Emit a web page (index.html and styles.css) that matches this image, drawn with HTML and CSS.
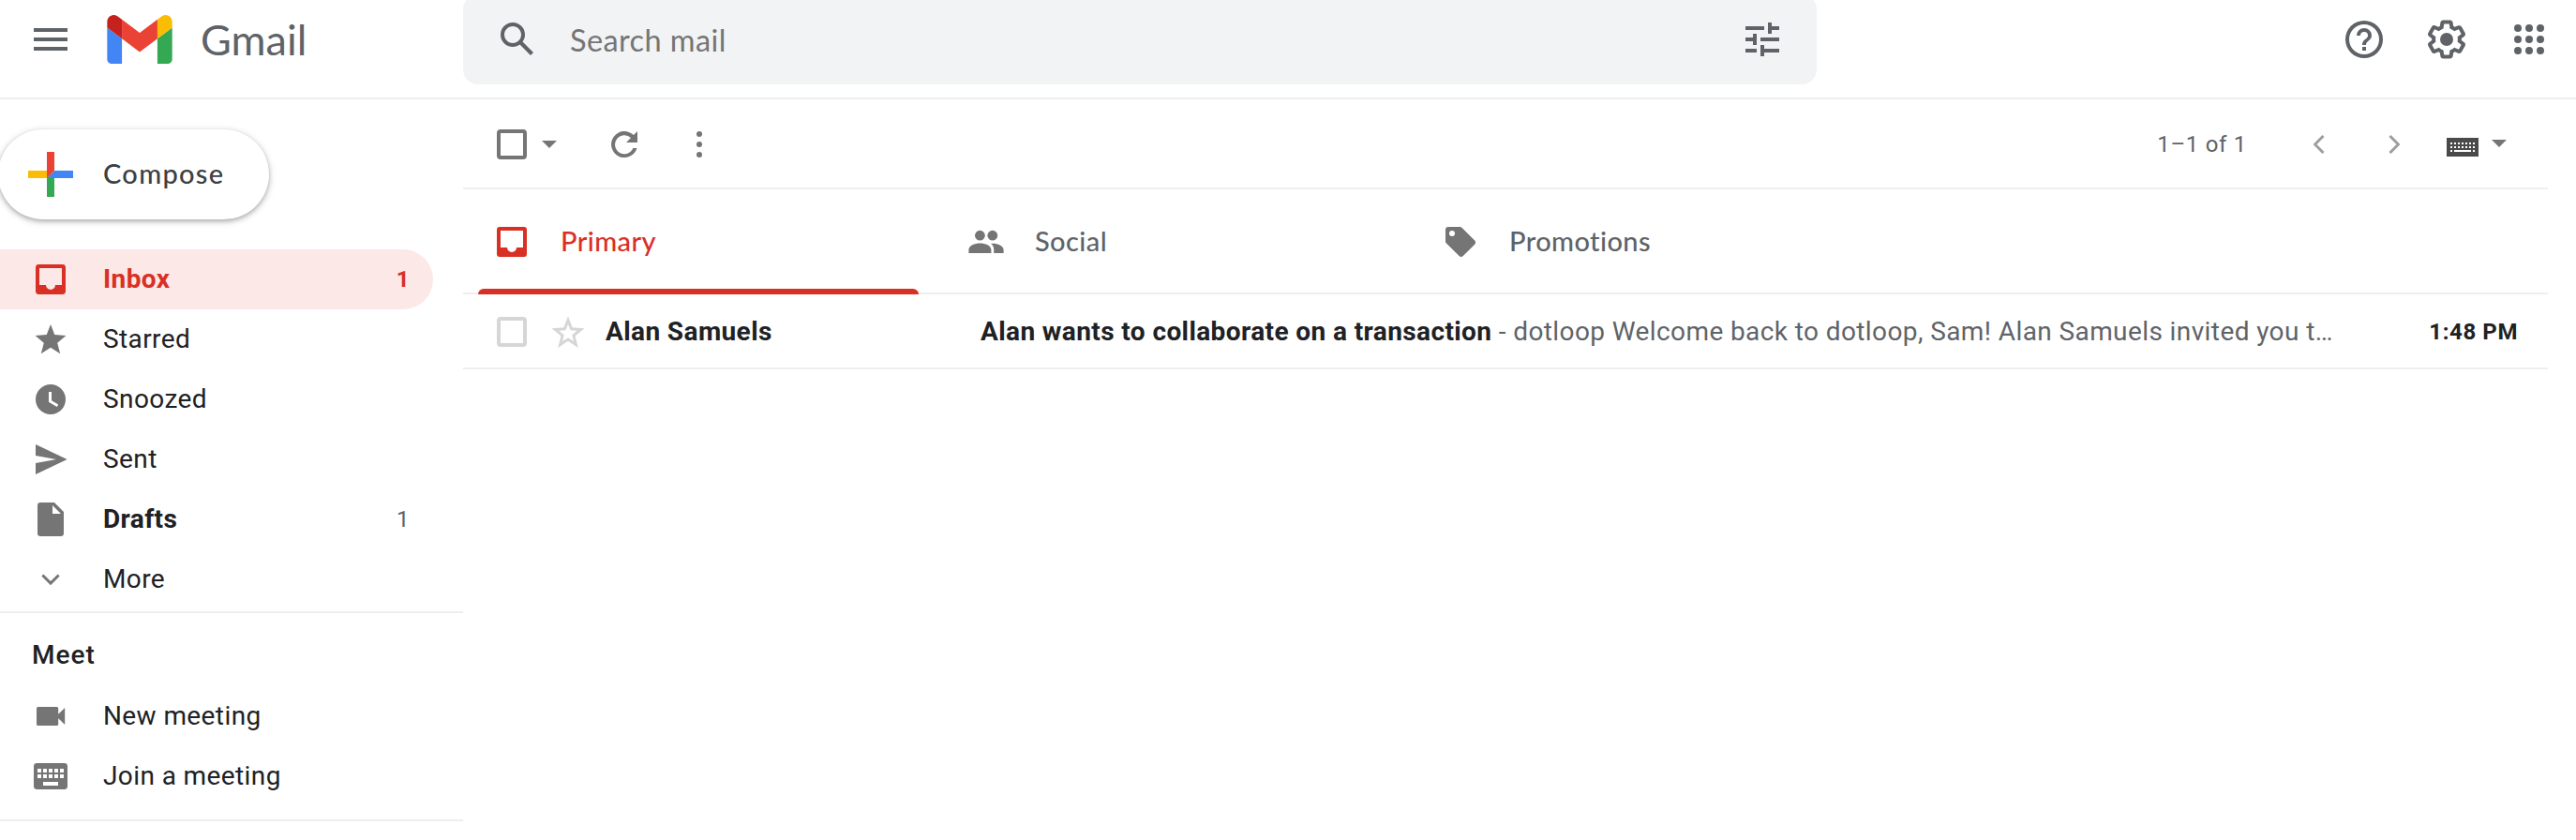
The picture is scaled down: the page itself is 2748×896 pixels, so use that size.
FILE: index.html
```
<!DOCTYPE html>
<html lang="en">
<head>
<meta charset="utf-8">
<title>Gmail</title>
<link rel="stylesheet" href="styles.css">
</head>
<body>
<header class="header">
  <div class="brand">
    <svg class="icon48" viewBox="0 0 24 24"><path d="M3 6h18v2H3zm0 5h18v2H3zm0 5h18v2H3z"/></svg>
    <svg class="logo" viewBox="52 42 88 66"><path fill="#4285f4" d="M58 108h14V74L52 59v43c0 3.320 2.690 6 6 6"/><path fill="#34a853" d="M120 108h14c3.320 0 6-2.690 6-6V59l-20 15"/><path fill="#fbbc04" d="M120 48v26l20-15v-8c0-7.420-8.470-11.650-14.400-7.200"/><path fill="#ea4335" d="M72 74V48l24 18 24-18v26L96 92"/><path fill="#c5221f" d="M52 51v8l20 15V48l-5.600-4.200c-5.940-4.450-14.400-.22-14.400 7.200"/></svg>
    <span class="brand-name">Gmail</span>
  </div>
  <div class="search">
    <svg class="icon48" viewBox="0 0 24 24"><path d="M20.490 19l-5.730-5.730C15.530 12.200 16 10.910 16 9.500A6.500 6.500 0 1 0 9.500 16c1.410 0 2.700-.47 3.770-1.240L19 20.490 20.490 19zM5 9.500C5 7.010 7.010 5 9.500 5S14 7.010 14 9.500 11.990 14 9.500 14 5 11.990 5 9.500z"/></svg>
    <span class="search-text">Search mail</span>
    <svg class="icon48" viewBox="0 0 24 24"><path d="M3 17v2h6v-2H3zM3 5v2h10V5H3zm10 16v-2h8v-2h-8v-2h-2v6h2zM7 9v2H3v2h4v2h2V9H7zm14 4v-2H11v2h10zm-6-4h2V7h4V5h-4V3h-2v6z"/></svg>
  </div>
  <div class="header-actions">
    <svg class="icon48" viewBox="0 0 24 24"><path d="M12 2a10 10 0 1 0 0 20 10 10 0 0 0 0-20zm0 18a8 8 0 1 1 0-16 8 8 0 0 1 0 16zm-1-4h2v2h-2zm1-10a4 4 0 0 0-4 4h2a2 2 0 1 1 4 0c0 2-3 1.750-3 5h2c0-2.250 3-2.500 3-5a4 4 0 0 0-4-4z"/></svg>
    <svg class="icon48" viewBox="0 0 24 24"><path fill-rule="evenodd" d="M13.850 22.250h-3.700c-.74 0-1.360-.54-1.450-1.270l-.27-1.890c-.27-.14-.53-.29-.79-.46l-1.800.72c-.7.26-1.470-.03-1.810-.65L2.200 15.530c-.35-.66-.2-1.440.36-1.880l1.530-1.190c-.01-.15-.02-.3-.02-.46 0-.15.010-.31.020-.46l-1.520-1.190c-.59-.45-.74-1.260-.37-1.880l1.850-3.190c.34-.62 1.110-.9 1.790-.63l1.810.73c.26-.17.52-.32.780-.46l.27-1.910c.09-.7.710-1.250 1.440-1.250h3.700c.74 0 1.360.54 1.450 1.270l.27 1.890c.27.140.53.290.79.460l1.800-.72c.71-.26 1.480.03 1.820.65l1.840 3.180c.36.660.2 1.440-.36 1.880l-1.520 1.190c.01.150.02.3.020.460s-.01.310-.02.460l1.520 1.190c.56.450.72 1.230.37 1.860l-1.860 3.220c-.34.620-1.110.9-1.800.63l-1.800-.72c-.26.170-.52.320-.78.460l-.27 1.910c-.1.680-.72 1.220-1.460 1.220zm-3.230-2h2.760l.37-2.550.53-.22c.44-.18.880-.44 1.340-.78l.45-.34 2.380.96 1.380-2.400-2.030-1.580.07-.56c.03-.26.060-.51.060-.78s-.03-.53-.06-.78l-.07-.56 2.030-1.580-1.390-2.400-2.390.96-.45-.35c-.42-.32-.87-.58-1.330-.77l-.52-.22-.37-2.550h-2.760l-.37 2.550-.53.210c-.44.190-.88.440-1.340.79l-.45.330-2.380-.95-1.390 2.390 2.030 1.580-.07.560a7 7 0 0 0-.06.790c0 .26.020.53.060.78l.07.560-2.030 1.580 1.380 2.400 2.390-.96.450.35c.43.330.86.580 1.330.77l.53.220.38 2.550z"/><circle cx="12" cy="12" r="3.500"/></svg>
    <svg class="icon48" viewBox="0 0 24 24"><circle cx="6" cy="6" r="2"/><circle cx="12" cy="6" r="2"/><circle cx="18" cy="6" r="2"/><circle cx="6" cy="12" r="2"/><circle cx="12" cy="12" r="2"/><circle cx="18" cy="12" r="2"/><circle cx="6" cy="18" r="2"/><circle cx="12" cy="18" r="2"/><circle cx="18" cy="18" r="2"/></svg>
  </div>
</header>
<div class="body">
  <nav class="sidebar">
    <div class="compose">
      <svg class="plus" viewBox="0 0 36 36"><path fill="#34a853" d="M16 16v14h4V20z"/><path fill="#4285f4" d="M30 16H20l-4 4h14z"/><path fill="#fbbc05" d="M6 16v4h10l4-4z"/><path fill="#ea4335" d="M20 16V6h-4v14z"/></svg>
      <span class="compose-text">Compose</span>
    </div>
    <div class="nav-item active"><svg class="icon40" viewBox="0 0 20 20"><path fill-rule="evenodd" d="M3.700 2h12.600A1.700 1.700 0 0 1 18 3.700v12.600a1.700 1.700 0 0 1-1.700 1.700H3.700A1.700 1.700 0 0 1 2 16.300V3.700A1.700 1.700 0 0 1 3.700 2zM4 4v9h3.500a2.500 2.500 0 0 0 5 0H16V4z"/></svg><span class="label">Inbox</span><span class="count">1</span></div>
    <div class="nav-item"><svg class="icon40" viewBox="0 0 20 20"><path d="M10 2l2.140 5.550 6.060.4-4.600 3.950 1.500 5.700L10 14.400l-5.100 3.200 1.500-5.700L1.800 7.950l6.060-.4z"/></svg><span class="label">Starred</span></div>
    <div class="nav-item"><svg class="icon40" viewBox="0 0 20 20"><path fill-rule="evenodd" d="M10 2a8 8 0 1 0 0 16 8 8 0 0 0 0-16zM9 6h1.500v4.600l3.600 2.100-.75 1.250L9 11.400z"/></svg><span class="label">Snoozed</span></div>
    <div class="nav-item"><svg class="icon40" viewBox="0 0 20 20"><path d="M2 2l16.800 8L2 18v-6l11-2L2 8z"/></svg><span class="label">Sent</span></div>
    <div class="nav-item bold"><svg class="icon40" viewBox="0 0 20 20"><path fill-rule="evenodd" d="M4.600 1H12l5 5v11.400a1.600 1.600 0 0 1-1.600 1.600H4.600A1.600 1.600 0 0 1 3 17.400V2.600A1.600 1.600 0 0 1 4.600 1zM11 2.500V7h4.500z"/></svg><span class="label">Drafts</span><span class="count">1</span></div>
    <div class="nav-item"><svg class="icon40" viewBox="0 0 20 20"><path d="M6.200 7.200L10 11l3.800-3.800 1.050 1.050L10 13.100 5.150 8.250z"/></svg><span class="label">More</span></div>
    <div class="meet">
      <div class="meet-title">Meet</div>
      <div class="nav-item"><svg class="icon40" viewBox="0 0 20 20"><path d="M3.300 5h10a.8.800 0 0 1 .8.800v3.100l3.500-3.400v9l-3.500-3.400v3.100a.8.800 0 0 1-.8.800h-10a.8.800 0 0 1-.8-.8V5.800a.8.800 0 0 1 .8-.8z"/></svg><span class="label">New meeting</span></div>
      <div class="nav-item"><svg class="icon40" viewBox="0 0 20 20"><rect x="1" y="3" width="18" height="14" rx="1.700"/><path fill="#fff" d="M3 6h2v2H3zM6 6h2v2H6zM9 6h2v2H9zM12 6h2v2h-2zM15 6h2v2h-2zM3 9h2v2H3zM6 9h2v2H6zM9 9h2v2H9zM12 9h2v2h-2zM15 9h2v2h-2zM6 13h8v2H6z"/></svg><span class="label">Join a meeting</span></div>
    </div>
  </nav>
  <main class="main">
    <div class="toolbar">
      <span class="checkbox"></span>
      <svg class="caret" viewBox="0 0 16 8"><path d="M0 0h16L8 8z"/></svg>
      <svg class="refresh" viewBox="0 0 28 28"><path d="M23.900 4.100A14 14 0 1 0 27.500 18h-4.200A10 10 0 1 1 21 7l-5 5h12V0z"/></svg>
      <svg class="dots" viewBox="0 0 6 28"><circle cx="3" cy="3" r="3"/><circle cx="3" cy="14" r="3"/><circle cx="3" cy="25" r="3"/></svg>
      <span class="pager">1–1 of 1</span>
      <svg class="chev prev" viewBox="0 0 12 20"><path d="M10.500 1L1.500 10l9 9"/></svg>
      <svg class="chev next" viewBox="0 0 12 20"><path d="M1.500 1l9 9-9 9"/></svg>
      <svg class="keyboard" viewBox="0 0 34 20"><path class="kb" d="M0 0h34v20H0z"/><path class="keys" d="M4 6h26M4 10h26" stroke-width="2" stroke-dasharray="2 2"/><path class="keys" d="M4 14h2M8 14h18M28 14h2" stroke-width="2"/></svg>
      <svg class="caret caret-kb" viewBox="0 0 16 8"><path d="M0 0h16L8 8z"/></svg>
    </div>
    <div class="tabs">
      <div class="tab selected"><svg class="icon40" viewBox="0 0 20 20"><path fill-rule="evenodd" d="M3.500 2h13A1.500 1.500 0 0 1 18 3.500v13a1.500 1.500 0 0 1-1.500 1.500h-13A1.500 1.500 0 0 1 2 16.500v-13A1.500 1.500 0 0 1 3.500 2zM4 4v9h3.500a2.500 2.500 0 0 0 5 0H16V4z"/></svg><span>Primary</span></div>
      <div class="tab"><svg class="icon40" viewBox="0 0 20 20"><circle cx="6.700" cy="6.600" r="2.700"/><circle cx="13.400" cy="6.600" r="2.700"/><path d="M.7 16v-1.800c0-2.200 3.200-3.500 6-3.500s6 1.300 6 3.500V16zM14.100 16v-1.800c0-1.400-.6-2.500-1.600-3.300 2.800-.4 6.800.9 6.800 3.300V16z"/></svg><span>Social</span></div>
      <div class="tab"><svg class="icon40" viewBox="0 0 20 20"><path fill-rule="evenodd" d="M3.500 2h6.200c.4 0 .8.150 1.100.45l6.800 6.800c.6.6.6 1.500 0 2.100l-6.200 6.200c-.6.600-1.500.600-2.100 0l-6.850-6.800A1.500 1.500 0 0 1 2 9.700V3.500A1.500 1.500 0 0 1 3.500 2zM5.500 4a1.500 1.500 0 1 0 0 3 1.500 1.500 0 0 0 0-3z"/></svg><span>Promotions</span></div>
    </div>
    <div class="mail">
      <span class="checkbox pale"></span>
      <svg class="star" viewBox="0 0 36 34"><path d="M18 4.500l3.600 9.300 10 .6-7.700 6.400 2.500 9.700L18 25l-8.400 5.500 2.500-9.700-7.700-6.400 10-.6z"/></svg>
      <span class="sender">Alan Samuels</span>
      <span class="content"><b class="subject">Alan wants to collaborate on a transaction</b><span class="snippet"> - dotloop Welcome back to dotloop, Sam! Alan Samuels invited you t…</span></span>
      <span class="time">1:48 PM</span>
    </div>
  </main>
</div>
</body>
</html>
```
FILE: styles.css
```
* { box-sizing: border-box; }
body {
  margin: 0;
  width: 2748px;
  height: 896px;
  overflow: hidden;
  background: #fff;
  color: #202124;
  font-family: Roboto, "Liberation Sans", sans-serif;
  font-size: 28px;
  letter-spacing: .4px;
}
svg { display: block; flex: none; fill: #757575; }
span { white-space: nowrap; }
.icon48 { width: 48px; height: 48px; fill: #5f6368; }
.icon40 { width: 40px; height: 40px; }

.header { display: flex; height: 106px; border-bottom: 2px solid #eee; }
.brand { display: flex; align-items: center; width: 494px; height: 84px; padding-left: 30px; }
.logo { width: 70px; height: 52px; margin-left: 36px; }
.brand-name { margin-left: 30px; font-family: Lato, sans-serif; font-size: 45px; line-height: 52px; letter-spacing: 0; color: #5f6368; }
.search {
  display: flex;
  align-items: center;
  width: 1444px;
  height: 96px;
  margin-top: -6px;
  padding: 0 34px;
  border-radius: 16px;
  background: #f1f3f4;
}
.search-text { flex: 1; margin-left: 32px; font-family: Lato, sans-serif; font-size: 32.5px; letter-spacing: .4px; color: #757575; }
.header-actions { display: flex; align-items: center; gap: 40px; height: 84px; margin-left: auto; padding-right: 26px; }

.body { display: flex; height: 790px; }
.sidebar { width: 494px; padding-top: 32px; }
.compose {
  display: flex;
  align-items: center;
  width: 289px;
  height: 96px;
  margin: 0 0 32px -2px;
  padding-left: 20px;
  border-radius: 48px;
  box-shadow: 0 2px 4px rgba(60, 64, 67, .302), 0 2px 6px 2px rgba(60, 64, 67, .149);
}
.plus { width: 72px; height: 72px; }
.compose-text { margin-left: 20px; padding-bottom: 3px; font-family: Lato, sans-serif; font-weight: 500; font-size: 29px; letter-spacing: 1.3px; color: #3c4043; }
.nav-item { display: flex; align-items: center; width: 462px; height: 64px; padding: 0 25px 0 34px; }
.label { flex: 1; margin-left: 36px; padding-bottom: 1px; }
.count { font-size: 24px; color: #5f6368; }
.active { background: #fce8e6; border-radius: 0 32px 32px 0; color: #d93025; font-weight: 700; }
.active svg { fill: #d93025; }
.active .count { color: #d93025; }
.bold .label { font-weight: 700; }
.meet { margin-top: 2px; height: 224px; border-top: 2px solid #eee; border-bottom: 2px solid #eee; }
.meet-title { height: 78px; padding: 27px 0 0 34px; line-height: 36px; font-weight: 500; letter-spacing: 1px; }

.main { width: 2224px; }
.toolbar { display: flex; align-items: center; height: 96px; padding: 2px 44px 0 36px; border-bottom: 2px solid #eee; }
.checkbox { flex: none; width: 32px; height: 32px; border: 4px solid #757575; border-radius: 4px; }
.pale { border-color: #d6d6d6; }
.caret { width: 16px; height: 8px; margin-left: 16px; }
.refresh { width: 28px; height: 28px; margin-left: 58px; }
.dots { width: 6px; height: 28px; margin-left: 63px; }
.pager { margin-left: auto; font-size: 24px; letter-spacing: .7px; color: #5f6368; }
.chev { width: 12px; height: 20px; fill: none; stroke: #9e9e9e; stroke-width: 3px; }
.prev { margin-left: 71px; }
.next { margin-left: 68px; }
.keyboard { width: 34px; height: 20px; margin: 6px 0 0 50px; }
.kb { fill: #4a4a4a; }
.keys { fill: none; stroke: #fff; }
.caret-kb { margin: -2px 0 0 14px; }
.tabs { display: flex; height: 112px; padding-left: 16px; border-bottom: 2px solid #eee; }
.tab {
  display: flex;
  align-items: center;
  width: 470px;
  height: 112px;
  margin-right: 36px;
  padding-left: 16px;
  font-family: Lato, sans-serif;
  font-weight: 500;
  font-size: 29px;
  letter-spacing: .4px;
  color: #5f6368;
}
.tab span { margin-left: 32px; padding-bottom: 4px; }
.selected { position: relative; color: #d93025; }
.selected svg { fill: #d93025; }
.selected::after { content: ""; position: absolute; left: 0; right: 0; bottom: 0; height: 6px; border-radius: 6px 6px 0 0; background: #d93025; }
.mail { display: flex; align-items: center; height: 80px; padding: 2px 32px 0 36px; border-bottom: 2px solid #eee; }
.star { width: 36px; height: 34px; margin-left: 26px; fill: none; stroke: #d6d6d6; stroke-width: 3px; }
.sender { width: 400px; margin-left: 22px; padding-bottom: 1px; font-weight: 700; }
.content { width: 1446px; padding-bottom: 1px; color: #5f6368; white-space: pre; }
.subject { color: #202124; }
.snippet { white-space: pre; }
.time { margin-left: auto; font-size: 24px; font-weight: 700; letter-spacing: .6px; }
```
